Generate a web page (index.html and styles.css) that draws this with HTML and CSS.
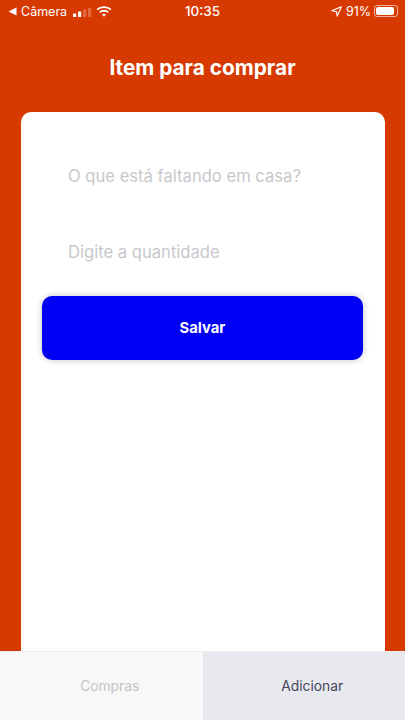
FILE: index.html
```html
<!DOCTYPE html>
<html lang="pt-BR">
<head>
    <meta charset="UTF-8">
    <meta name="viewport" content="width=device-width, initial-scale=1.0">
    <title>Item para comprar</title>
    <link rel="stylesheet" href="styles.css">
</head>
<body>
    <div class="app">
        <div class="status-bar">
            <div class="status-left">
                <svg class="icon-back" width="9" height="9" viewBox="0 0 9 9"><path d="M0.5 4.5 L8.5 0.5 V8.5 Z" fill="#fff"/></svg>
                <span>Câmera</span>
                <svg class="icon-signal" width="19" height="9" viewBox="0 0 19 9">
                    <rect x="0" y="5.5" width="3.2" height="3.5" rx="0.5" fill="#fff"/>
                    <rect x="5" y="3.5" width="3.2" height="5.5" rx="0.5" fill="#fff"/>
                    <rect x="10" y="1.5" width="3.2" height="7.5" rx="0.5" fill="#fff" opacity="0.25"/>
                    <rect x="15" y="0" width="3.2" height="9" rx="0.5" fill="#fff" opacity="0.25"/>
                </svg>
                <svg class="icon-wifi" width="16" height="11" viewBox="0 0 17 12">
                    <path d="M1 4 C5.2 0.4 11.8 0.4 16 4" fill="none" stroke="#fff" stroke-width="2"/>
                    <path d="M3.8 6.8 C6.4 4.7 10.6 4.7 13.2 6.8" fill="none" stroke="#fff" stroke-width="2"/>
                    <path d="M6.2 9.2 C7.6 8.1 9.4 8.1 10.8 9.2 L8.5 11.7 Z" fill="#fff"/>
                </svg>
            </div>
            <div class="status-time">10:35</div>
            <div class="status-right">
                <svg class="icon-location" width="11" height="11" viewBox="0 0 11 11"><path d="M10.3 0.7 L0.8 4.8 L5.4 5.6 L6.2 10.2 Z" fill="none" stroke="#fff" stroke-width="1.1" stroke-linejoin="round"/></svg>
                <span>91%</span>
                <div class="battery"><div class="battery-level"></div></div>
            </div>
        </div>

        <h1 class="title">Item para comprar</h1>

        <div class="card">
            <form class="form">
                <input class="field" type="text" placeholder="O que está faltando em casa?">
                <input class="field" type="text" placeholder="Digite a quantidade">
                <button class="save-button" type="button">Salvar</button>
            </form>
        </div>

        <div class="tabs">
            <div class="tab">Compras</div>
            <div class="tab tab-active">Adicionar</div>
        </div>
    </div>
</body>
</html>
```

FILE: styles.css
```css
body {
    margin: 0;
    font-family: 'Inter', 'Liberation Sans', sans-serif;
    background-color: #d63a00;
}

.app {
    display: flex;
    flex-direction: column;
    height: 720px;
    overflow: hidden;
    background-color: #d63a00;
}

.status-bar {
    display: grid;
    grid-template-columns: 1fr auto 1fr;
    align-items: center;
    height: 22px;
    padding: 0 7px 0 8px;
    color: #fff;
    font-size: 12.5px;
}

.status-left {
    display: flex;
    align-items: center;
}

.icon-back {
    margin-right: 4px;
}

.icon-signal {
    margin-left: 6px;
    margin-top: 2px;
}

.icon-wifi {
    margin-left: 4px;
}

.status-time {
    font-weight: 500;
    font-size: 13.5px;
    margin-right: 1px;
}

.status-right {
    display: flex;
    align-items: center;
    justify-content: flex-end;
    gap: 4px;
}

.status-right span {
    margin-right: -1px;
}

.battery {
    width: 20px;
    height: 8px;
    padding: 1px;
    border: 1px solid rgba(255, 255, 255, 0.6);
    border-radius: 3px;
}

.battery-level {
    width: 92%;
    height: 100%;
    background-color: #fff;
    border-radius: 2px;
}

.title {
    margin: 0;
    padding-top: 34px;
    height: 57px;
    box-sizing: border-box;
    color: #fff;
    font-size: 20.8px;
    line-height: 24px;
    font-weight: 700;
    text-align: center;
}

.card {
    flex: 1;
    margin: 33px 20px 0 21px;
    padding: 0 22px 0 21px;
    background-color: #fff;
    border-radius: 10px 10px 0 0;
}

.form {
    display: flex;
    flex-direction: column;
}

.field {
    height: 76px;
    padding: 0 26px;
    border: none;
    outline: none;
    background: transparent;
    font-family: inherit;
    font-size: 16.6px;
    box-sizing: border-box;
}

.field:first-child {
    margin-top: 26px;
}

.field::placeholder {
    color: #c8c8cb;
}

.save-button {
    height: 64px;
    margin-top: 6px;
    border: none;
    border-radius: 10px;
    background-color: #0000f5;
    color: #fff;
    font-family: inherit;
    font-size: 14.8px;
    font-weight: 700;
    box-shadow: 0 0 6px rgba(0, 0, 0, 0.25);
}

.tabs {
    display: flex;
    height: 69px;
    border-top: 1px solid #eeeeee;
    box-sizing: border-box;
}

.tab {
    flex: 1;
    display: flex;
    align-items: center;
    justify-content: center;
    padding-left: 17px;
    background-color: #f8f8f8;
    color: #c4c4c9;
    font-size: 13.8px;
}

.tab-active {
    background-color: #e7e9ee;
    color: #45455a;
}
```
